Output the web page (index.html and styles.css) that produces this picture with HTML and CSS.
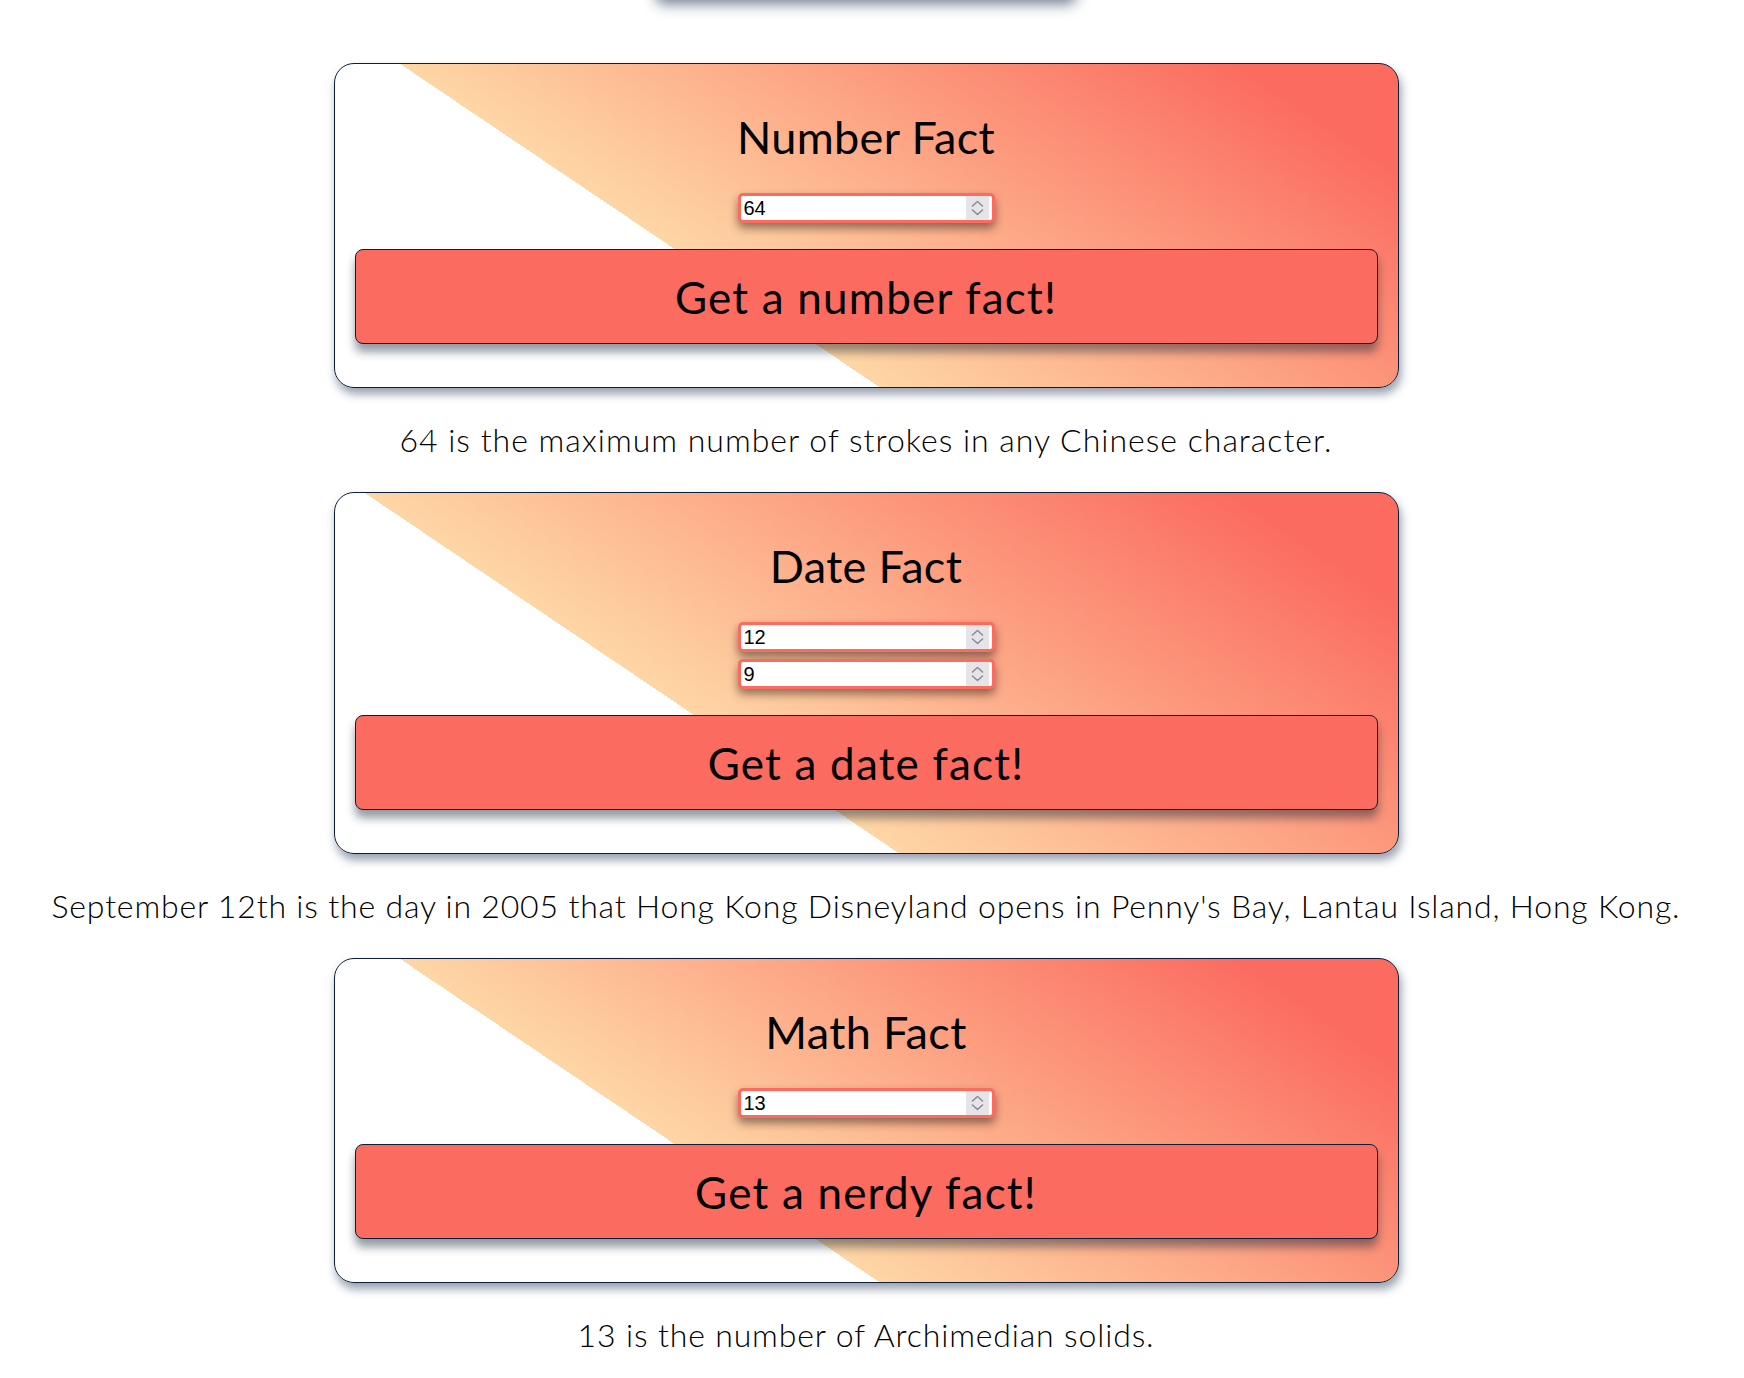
FILE: index.html
```html
<!DOCTYPE html>
<html lang="en">
<head>
<meta charset="utf-8">
<title>Facts</title>
<link rel="stylesheet" href="styles.css">
</head>
<body>
<main class="page">
  <div class="top-btn"></div>

  <section class="card">
    <h2 class="card-title">Number Fact</h2>
    <div class="fields">
      <div class="num-input">
        <input class="num-value" type="text" value="64">
        <span class="spin"><svg width="23" height="24" viewBox="0 0 23 24"><polyline points="6.5,10 11.5,5.5 16.5,10"/><polyline points="6.5,14 11.5,18.5 16.5,14"/></svg></span>
      </div>
    </div>
    <button class="fact-btn">Get a number fact!</button>
  </section>
  <p class="fact">64 is the maximum number of strokes in any Chinese character.</p>

  <section class="card">
    <h2 class="card-title">Date Fact</h2>
    <div class="fields">
      <div class="num-input">
        <input class="num-value" type="text" value="12">
        <span class="spin"><svg width="23" height="24" viewBox="0 0 23 24"><polyline points="6.5,10 11.5,5.5 16.5,10"/><polyline points="6.5,14 11.5,18.5 16.5,14"/></svg></span>
      </div>
      <div class="num-input">
        <input class="num-value" type="text" value="9">
        <span class="spin"><svg width="23" height="24" viewBox="0 0 23 24"><polyline points="6.5,10 11.5,5.5 16.5,10"/><polyline points="6.5,14 11.5,18.5 16.5,14"/></svg></span>
      </div>
    </div>
    <button class="fact-btn">Get a date fact!</button>
  </section>
  <p class="fact fact-long">September 12th is the day in 2005 that Hong Kong Disneyland opens in Penny's Bay, Lantau Island, Hong Kong.</p>

  <section class="card">
    <h2 class="card-title">Math Fact</h2>
    <div class="fields">
      <div class="num-input">
        <input class="num-value" type="text" value="13">
        <span class="spin"><svg width="23" height="24" viewBox="0 0 23 24"><polyline points="6.5,10 11.5,5.5 16.5,10"/><polyline points="6.5,14 11.5,18.5 16.5,14"/></svg></span>
      </div>
    </div>
    <button class="fact-btn">Get a nerdy fact!</button>
  </section>
  <p class="fact fact-short">13 is the number of Archimedian solids.</p>
</main>
</body>
</html>
```

FILE: styles.css
```css
html, body {
  margin: 0;
  padding: 0;
  background: #ffffff;
}

body {
  font-family: "Lato", "Open Sans", sans-serif;
  color: #000;
}

.page {
  display: flex;
  flex-direction: column;
  align-items: center;
  padding-right: 12px;
}

.top-btn {
  width: 420px;
  height: 60px;
  margin-top: -62px;
  background: #fb6b5f;
  border-radius: 8px;
  box-shadow: 0 6px 14px rgba(20, 40, 70, 0.6);
}

.card {
  box-sizing: border-box;
  width: 1065px;
  margin-top: 65px;
  padding: 20px 20px 43px;
  border: 1px solid #0b2038;
  border-radius: 20px;
  background: linear-gradient(34deg, #ffffff 35.3%, #fed6a5 35.3%, #fb6b5f 90%);
  box-shadow: 2px 6px 10px rgba(25, 45, 75, 0.45);
  display: flex;
  flex-direction: column;
  align-items: center;
}

.card + .fact + .card {
  margin-top: 0;
}

.card-title {
  margin: 26px 0 0;
  font-size: 45px;
  font-weight: 400;
  letter-spacing: 0.35px;
  line-height: 54px;
}

.fields {
  margin-top: 29px;
  display: flex;
  flex-direction: column;
  gap: 7px;
}

.num-input {
  box-sizing: border-box;
  width: 257px;
  height: 30px;
  border: 3px solid #fb6b5f;
  border-radius: 5px;
  background: #fff;
  display: flex;
  align-items: stretch;
  box-shadow: 0 5px 10px rgba(0, 0, 0, 0.45);
}

.num-value {
  flex: 1;
  min-width: 0;
  border: none;
  outline: none;
  background: transparent;
  padding: 0 3px;
  margin: 0;
  font-family: "Liberation Sans", Arial, sans-serif;
  font-size: 20px;
  color: #000;
}

.spin {
  width: 23px;
  margin-right: 3px;
  background: #e4e4e9;
  display: flex;
}

.spin svg {
  display: block;
}

.spin polyline {
  fill: none;
  stroke: #8d8d96;
  stroke-width: 1.6;
  stroke-linecap: round;
  stroke-linejoin: round;
}

.fact-btn {
  box-sizing: border-box;
  width: 100%;
  height: 95px;
  margin-top: 26px;
  padding: 0;
  border: 1px solid #0b2038;
  border-radius: 8px;
  background: #fb6b5f;
  color: #000;
  font-family: "Lato", "Open Sans", sans-serif;
  font-size: 44px;
  font-weight: 400;
  letter-spacing: 1.2px;
  box-shadow: 0 8px 10px rgba(15, 30, 50, 0.45);
}

.fact {
  margin: 33px 0;
  font-size: 32px;
  font-weight: 300;
  letter-spacing: 1px;
  line-height: 38px;
  text-align: center;
  white-space: nowrap;
}

.fact-long {
  letter-spacing: 0.82px;
}

.fact-short {
  letter-spacing: 0.85px;
}
```
